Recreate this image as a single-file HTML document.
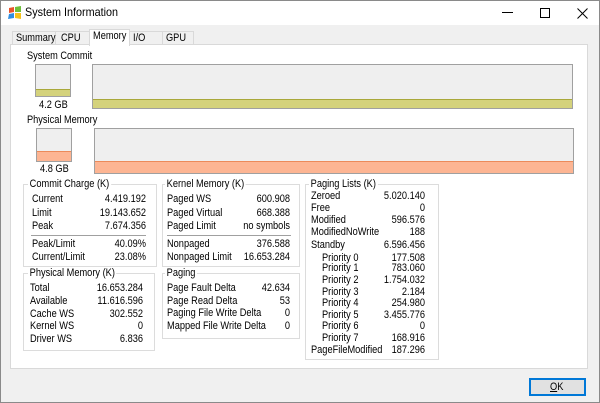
<!DOCTYPE html>
<html><head><meta charset="utf-8"><style>
*{margin:0;padding:0;box-sizing:border-box}
body{width:600px;height:403px;overflow:hidden;background:#f0f0f0;font:11px "Liberation Sans",sans-serif;color:#000;position:relative}
.a{position:absolute;white-space:nowrap;line-height:13px;transform:scaleX(0.84);transform-origin:0 0}
.r{text-align:right;transform-origin:100% 0}
.g{position:absolute;border:1px solid #dcdcdc}
.gt{position:absolute;background:#fff;padding:0 2px;line-height:13px;white-space:nowrap;transform:scaleX(0.84);transform-origin:0 0}
</style></head><body>
<div style="position:absolute;left:0;top:0;width:600px;height:403px;border:1px solid #8a8a8a;"></div>
<div style="position:absolute;left:1px;top:1px;width:598px;height:24px;background:#fff"></div>
<svg style="position:absolute;left:7px;top:6px" width="16" height="14" viewBox="0 0 16 14"><path d="M2 2 L7 1 L7 6 L2 7Z" fill="#e9532b"/><path d="M8 1 L14 0 L14 6 L8 6Z" fill="#6fbf3a"/><path d="M2 8 L7 7 L7 12 L1 13Z" fill="#2f8ee0"/><path d="M8 7 L14 7 L14 13 L8 12Z" fill="#f5c21b"/></svg>
<div class="a" style="left:25px;top:6px;font-size:12px;transform:scaleX(0.9)">System Information</div>
<div style="position:absolute;left:502px;top:12px;width:11px;height:1px;background:#000"></div>
<div style="position:absolute;left:540px;top:8px;width:10px;height:10px;border:1px solid #000"></div>
<svg style="position:absolute;left:577px;top:8px" width="11" height="11" viewBox="0 0 11 11"><path d="M0.5 0.5 L10.5 10.5 M10.5 0.5 L0.5 10.5" stroke="#000" stroke-width="1"/></svg>
<!-- panel -->
<div style="position:absolute;left:10px;top:44px;width:578px;height:325px;background:#fff;border:1px solid #d9d9d9"></div>
<!-- tabs -->
<div style="position:absolute;left:12px;top:31px;width:44px;height:14px;border:1px solid #d9d9d9;background:#f0f0f0"></div>
<div style="position:absolute;left:55px;top:31px;width:35px;height:14px;border:1px solid #d9d9d9;background:#f0f0f0"></div>
<div style="position:absolute;left:129px;top:31px;width:34px;height:14px;border:1px solid #d9d9d9;background:#f0f0f0"></div>
<div style="position:absolute;left:162px;top:31px;width:32px;height:14px;border:1px solid #d9d9d9;background:#f0f0f0"></div>
<div style="position:absolute;left:89px;top:29px;width:41px;height:17px;border:1px solid #d9d9d9;border-bottom:none;background:#fff"></div>
<div class="a" style="left:16px;top:32px">Summary</div>
<div class="a" style="left:61px;top:32px">CPU</div>
<div class="a" style="left:93px;top:30px">Memory</div>
<div class="a" style="left:133px;top:32px">I/O</div>
<div class="a" style="left:166px;top:32px">GPU</div>
<!-- graphs -->
<div class="a" style="left:27px;top:50px">System Commit</div>
<div style="position:absolute;left:35px;top:64px;width:36px;height:33px;background:#efefef;border:1px solid #a0a0a0"></div>
<div style="position:absolute;left:36px;top:89px;width:34px;height:7px;background:#d4d27c;border-top:1px solid #a9a83a"></div>
<div class="a" style="left:39px;top:99px">4.2 GB</div>
<div style="position:absolute;left:92px;top:64px;width:481px;height:45px;background:#efefef;border:1px solid #a0a0a0"></div>
<div style="position:absolute;left:93px;top:99px;width:479px;height:9px;background:#d4d27c;border-top:1px solid #a9a83a"></div>
<div class="a" style="left:27px;top:114px">Physical Memory</div>
<div style="position:absolute;left:36px;top:128px;width:36px;height:34px;background:#efefef;border:1px solid #a0a0a0"></div>
<div style="position:absolute;left:37px;top:151px;width:34px;height:10px;background:#fdb593;border-top:1px solid #ec8a5a"></div>
<div class="a" style="left:40px;top:163px">4.8 GB</div>
<div style="position:absolute;left:94px;top:128px;width:480px;height:46px;background:#efefef;border:1px solid #a0a0a0"></div>
<div style="position:absolute;left:95px;top:161px;width:478px;height:12px;background:#fdb593;border-top:1px solid #ec8a5a"></div>
<!-- groups -->
<div class="g" style="left:23px;top:184px;width:134px;height:83px"></div><div class="gt" style="left:28px;top:178px">Commit Charge (K)</div>
<div class="g" style="left:162px;top:184px;width:138px;height:83px"></div><div class="gt" style="left:165px;top:178px">Kernel Memory (K)</div>
<div class="g" style="left:23px;top:273px;width:132px;height:78px"></div><div class="gt" style="left:28px;top:267px">Physical Memory (K)</div>
<div class="g" style="left:162px;top:273px;width:138px;height:66px"></div><div class="gt" style="left:165px;top:267px">Paging</div>
<div class="g" style="left:305px;top:184px;width:134px;height:176px"></div><div class="gt" style="left:309px;top:178px">Paging Lists (K)</div>
<div style="position:absolute;left:31px;top:235px;width:115px;height:1px;background:#a0a0a0"></div>
<div style="position:absolute;left:167px;top:235px;width:124px;height:1px;background:#a0a0a0"></div>

<div class="a" style="left:32px;top:193px">Current</div><div class="a r" style="left:66px;width:80px;top:193px">4.419.192</div>
<div class="a" style="left:32px;top:207px">Limit</div><div class="a r" style="left:66px;width:80px;top:207px">19.143.652</div>
<div class="a" style="left:32px;top:220px">Peak</div><div class="a r" style="left:66px;width:80px;top:220px">7.674.356</div>
<div class="a" style="left:32px;top:238px">Peak/Limit</div><div class="a r" style="left:66px;width:80px;top:238px">40.09%</div>
<div class="a" style="left:32px;top:251px">Current/Limit</div><div class="a r" style="left:66px;width:80px;top:251px">23.08%</div>

<div class="a" style="left:167px;top:193px">Paged WS</div><div class="a r" style="left:210px;width:80px;top:193px">600.908</div>
<div class="a" style="left:167px;top:207px">Paged Virtual</div><div class="a r" style="left:210px;width:80px;top:207px">668.388</div>
<div class="a" style="left:167px;top:220px">Paged Limit</div><div class="a r" style="left:210px;width:80px;top:220px">no symbols</div>
<div class="a" style="left:167px;top:238px">Nonpaged</div><div class="a r" style="left:210px;width:80px;top:238px">376.588</div>
<div class="a" style="left:167px;top:251px">Nonpaged Limit</div><div class="a r" style="left:210px;width:80px;top:251px">16.653.284</div>

<div class="a" style="left:30px;top:282px">Total</div><div class="a r" style="left:63px;width:80px;top:282px">16.653.284</div>
<div class="a" style="left:30px;top:295px">Available</div><div class="a r" style="left:63px;width:80px;top:295px">11.616.596</div>
<div class="a" style="left:30px;top:308px">Cache WS</div><div class="a r" style="left:63px;width:80px;top:308px">302.552</div>
<div class="a" style="left:30px;top:320px">Kernel WS</div><div class="a r" style="left:63px;width:80px;top:320px">0</div>
<div class="a" style="left:30px;top:333px">Driver WS</div><div class="a r" style="left:63px;width:80px;top:333px">6.836</div>

<div class="a" style="left:167px;top:282px">Page Fault Delta</div><div class="a r" style="left:230px;width:60px;top:282px">42.634</div>
<div class="a" style="left:167px;top:295px">Page Read Delta</div><div class="a r" style="left:230px;width:60px;top:295px">53</div>
<div class="a" style="left:167px;top:307px">Paging File Write Delta</div><div class="a r" style="left:260px;width:30px;top:307px">0</div>
<div class="a" style="left:167px;top:320px">Mapped File Write Delta</div><div class="a r" style="left:260px;width:30px;top:320px">0</div>

<div class="a" style="left:311px;top:190px">Zeroed</div><div class="a r" style="left:345px;width:80px;top:190px">5.020.140</div>
<div class="a" style="left:311px;top:202px">Free</div><div class="a r" style="left:345px;width:80px;top:202px">0</div>
<div class="a" style="left:311px;top:214px">Modified</div><div class="a r" style="left:345px;width:80px;top:214px">596.576</div>
<div class="a" style="left:311px;top:226px">ModifiedNoWrite</div><div class="a r" style="left:385px;width:40px;top:226px">188</div>
<div class="a" style="left:311px;top:239px">Standby</div><div class="a r" style="left:345px;width:80px;top:239px">6.596.456</div>
<div class="a" style="left:322px;top:252px">Priority 0</div><div class="a r" style="left:365px;width:60px;top:252px">177.508</div>
<div class="a" style="left:322px;top:262px">Priority 1</div><div class="a r" style="left:365px;width:60px;top:262px">783.060</div>
<div class="a" style="left:322px;top:274px">Priority 2</div><div class="a r" style="left:345px;width:80px;top:274px">1.754.032</div>
<div class="a" style="left:322px;top:286px">Priority 3</div><div class="a r" style="left:365px;width:60px;top:286px">2.184</div>
<div class="a" style="left:322px;top:297px">Priority 4</div><div class="a r" style="left:365px;width:60px;top:297px">254.980</div>
<div class="a" style="left:322px;top:309px">Priority 5</div><div class="a r" style="left:345px;width:80px;top:309px">3.455.776</div>
<div class="a" style="left:322px;top:320px">Priority 6</div><div class="a r" style="left:365px;width:60px;top:320px">0</div>
<div class="a" style="left:322px;top:332px">Priority 7</div><div class="a r" style="left:365px;width:60px;top:332px">168.916</div>
<div class="a" style="left:311px;top:344px">PageFileModified</div><div class="a r" style="left:365px;width:60px;top:344px">187.296</div>

<div style="position:absolute;left:529px;top:378px;width:57px;height:18px;border:1px solid #0078d7;background:#e1e1e1;box-shadow:inset 0 0 0 1px #0078d7"></div>
<div class="a" style="left:550px;top:381px"><u>O</u>K</div>
</body></html>
